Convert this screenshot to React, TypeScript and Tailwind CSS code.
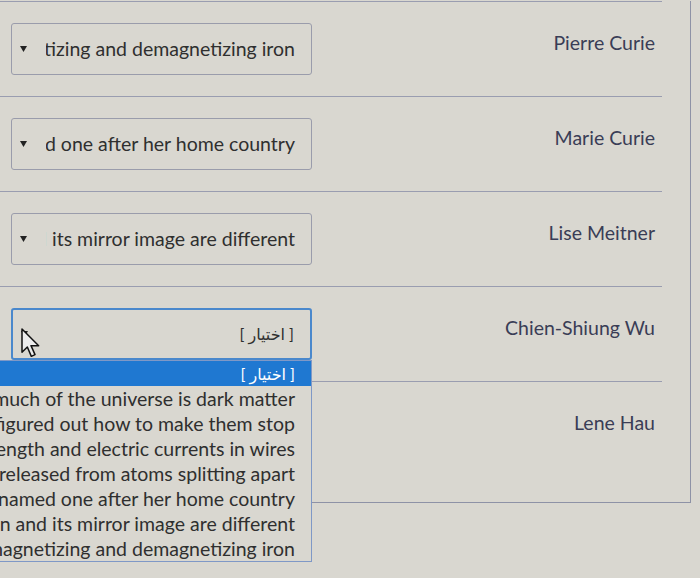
import React from "react";

type Row = { value: string | null; name: string; open?: boolean; covered?: boolean };

const rows: Row[] = [
  { value: "Studied magnetizing and demagnetizing iron", name: "Pierre Curie" },
  { value: "Discovered two elements and named one after her home country", name: "Marie Curie" },
  { value: "Proved that a reaction and its mirror image are different", name: "Lise Meitner" },
  { value: null, name: "Chien-Shiung Wu", open: true },
  { value: null, name: "Lene Hau", covered: true },
];

const options = [
  "Showed how much of the universe is dark matter",
  "Slowed light down so much she figured out how to make them stop",
  "Linked light wavelength and electric currents in wires",
  "Explained the energy released from atoms splitting apart",
  "Discovered two elements and named one after her home country",
  "Proved that a reaction and its mirror image are different",
  "Studied magnetizing and demagnetizing iron",
];

const placeholder = "[ اختيار ]";

function Caret() {
  return (
    <svg width="7" height="6" viewBox="0 0 7 6" className="shrink-0">
      <path d="M0 0 H7 L3.5 6 Z" fill="#222" />
    </svg>
  );
}

function Cursor() {
  return (
    <svg
      width="20"
      height="30"
      viewBox="0 0 12 18"
      className="absolute left-[8px] top-[18px] z-20"
    >
      <path
        d="M0.6 0.6 L0.6 14.5 L3.8 11.4 L6.2 17 L8.4 16 L6 10.6 L10.6 10.6 Z"
        fill="#ececec"
        stroke="#111"
        strokeWidth="0.9"
        strokeLinejoin="round"
      />
    </svg>
  );
}

function SelectBox({ row }: { row: Row }) {
  const focused = !!row.open;
  return (
    <div
      className={
        "relative mt-[21px] ml-[11px] w-[301px] h-[52px] rounded-[3px] flex items-center " +
        (focused ? "border-2 border-[#4a88cc]" : "border border-[#9a9cab]")
      }
    >
      <div className="pl-[8px] w-[34px]">
        <Caret />
      </div>
      <div className="flex-1 flex justify-end overflow-hidden pr-[16px]">
        {row.value && (
          <span className="whitespace-nowrap text-[19.5px] text-[#2f2f2f]">{row.value}</span>
        )}
        {!row.value && !row.covered && (
          <span className="whitespace-nowrap text-[16px] text-[#2f2f2f]">{placeholder}</span>
        )}
      </div>
      {focused && <Cursor />}
      {focused && (
        <div className="absolute top-[50px] right-[-2px] w-[440px] z-10 border border-[#7f98c6] bg-[#d9d7d0] overflow-hidden">
          <div className="h-[25px] bg-[#1f78d1] text-white flex items-center justify-end pr-[16px]">
            <span className="whitespace-nowrap text-[16px]">{placeholder}</span>
          </div>
          {options.map((o) => (
            <div key={o} className="h-[25px] flex items-center justify-end pr-[16px]">
              <span className="whitespace-nowrap text-[19.5px] leading-[22px] text-[#2f2f2f]">{o}</span>
            </div>
          ))}
        </div>
      )}
    </div>
  );
}

export default function App() {
  return (
    <div
      className="min-h-[578px] w-[700px] overflow-hidden bg-[#d9d7d0] pt-[1px]"
      style={{ fontFamily: "Lato, 'DejaVu Sans', sans-serif" }}
    >
      <div className="w-[691px] border-r border-b border-[#8e92a6]">
        <div className="mr-[28px] border-t border-[#9a9db0]">
          {rows.map((row) => (
            <div
              key={row.name}
              className={
                "flex justify-between " +
                (row.covered ? "h-[120px]" : "h-[95px] border-b border-[#9a9db0]")
              }
            >
              <SelectBox row={row} />
              <div className="pt-[29px] pr-[7px] text-[19.5px] leading-[24px] text-[#3a3d56]">
                {row.name}
              </div>
            </div>
          ))}
        </div>
      </div>
    </div>
  );
}
